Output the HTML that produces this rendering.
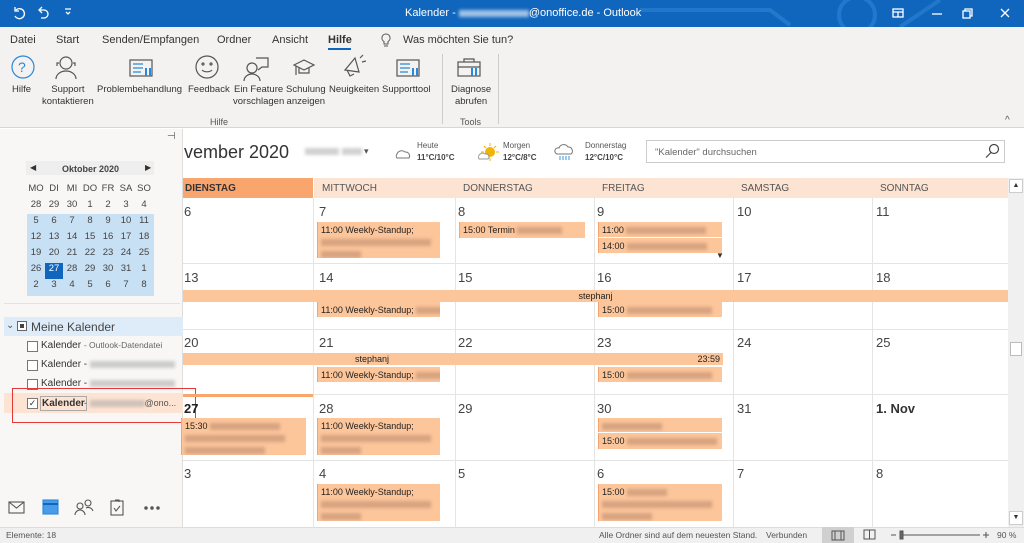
<!DOCTYPE html>
<html><head><meta charset="utf-8"><style>
*{margin:0;padding:0;box-sizing:border-box}
body{width:1024px;height:543px;overflow:hidden;font-family:"Liberation Sans",sans-serif;background:#fff;position:relative;color:#333}
.a{position:absolute}
.t{font-size:11px;white-space:nowrap}
.blur{display:inline-block;height:7px;background:#a0705a;opacity:.4;filter:blur(1.5px);vertical-align:middle}
.gb{background:#999;opacity:.45}
.ev{position:absolute;background:#fcc59a;border-left:3px solid #fff;box-shadow:inset 1px 0 0 #f6a36e;font-size:9px;color:#222;padding:2px 4px;line-height:12px;overflow:hidden;white-space:nowrap}
.day{position:absolute;font-size:13px;color:#444}
.vl{position:absolute;width:1px;background:#e4e4e4}
.hl{position:absolute;height:1px;background:#e4e4e4}
.hd{position:absolute;top:178px;height:20px;background:#fde3d2;font-size:10px;color:#555;padding:5px 0 0 8px}
.rb{position:absolute;top:55px;text-align:center;font-size:9.5px;color:#333;line-height:12px}
.mc td{width:18px;height:16px;text-align:center;font-size:9.5px;color:#444}
</style></head><body>
<!-- title bar -->
<div class="a" style="left:0;top:0;width:1024px;height:27px;background:#1066bd"></div>
<svg class="a" style="left:0;top:0" width="1024" height="27"><g stroke="#2a80d0" fill="none" stroke-width="4" opacity=".7"><circle cx="857" cy="15" r="18"/><path d="M640 10 H770 L790 25 M900 27 L940 0"/></g>
<g stroke="#fff" fill="none" stroke-width="1.3"><path d="M16 10a5 5 0 1 1 -1 6M15 7v4h4"/><path d="M42 7l-3 3 3 3M39 10h5a4 4 0 0 1 0 8h-3"/><path d="M66 12l2 2 2-2M65 9h6"/><rect x="893" y="9" width="10" height="8"/><path d="M893 12h10M898 12v5"/><path d="M932 14h10"/><rect x="963" y="11" width="7" height="7"/><path d="M965 11v-2h7v7h-2"/><path d="M1001 9l8 8M1009 9l-8 8"/></g></svg>
<div class="a t" style="left:405px;top:7px;color:#fff;font-size:11px">Kalender - <span class="blur" style="width:70px;background:#fff;opacity:.6"></span>@onoffice.de - Outlook</div>
<!-- ribbon -->
<div class="a" style="left:0;top:27px;width:1024px;height:101px;background:#f3f2f1;border-bottom:1px solid #d6d6d6"></div>
<div class="a t" style="top:34px;left:10px;font-size:11px;color:#333">Datei</div>
<div class="a t" style="top:34px;left:56px;font-size:11px">Start</div>
<div class="a t" style="top:34px;left:102px;font-size:11px">Senden/Empfangen</div>
<div class="a t" style="top:34px;left:217px;font-size:11px">Ordner</div>
<div class="a t" style="top:34px;left:272px;font-size:11px">Ansicht</div>
<div class="a t" style="top:34px;left:328px;font-size:11px;font-weight:bold">Hilfe</div>
<div class="a" style="top:48px;left:328px;width:23px;height:2px;background:#1066bd"></div>
<svg class="a" style="left:380px;top:32px" width="12" height="16"><path d="M6 2a4 4 0 0 0-2 7.5V12h4V9.5A4 4 0 0 0 6 2zM4 14h4" fill="none" stroke="#555"/></svg>
<div class="a t" style="top:34px;left:403px;font-size:11px">Was möchten Sie tun?</div>
<svg class="a" style="left:0;top:52px" width="520" height="32" fill="none" stroke="#555" stroke-width="1.2">
<circle cx="23" cy="15" r="11" stroke="#2b88d8"/><text x="18" y="20" font-size="14" fill="#2b88d8" stroke="none" font-family="Liberation Sans">?</text>
<circle cx="66" cy="11" r="6"/><path d="M56 27a10 8 0 0 1 20 0M59 11h-2v3M73 11h2v3"/>
<rect x="130" y="8" width="22" height="16"/><path d="M133 12h10M133 16h10M133 20h8" stroke="#2b88d8"/><path d="M146 16v8M150 16v8" stroke="#2b88d8" stroke-width="2"/>
<circle cx="207" cy="15" r="11"/><circle cx="203" cy="12" r="1"/><circle cx="211" cy="12" r="1"/><path d="M202 18a6 4 0 0 0 10 0"/>
<circle cx="252" cy="16" r="5"/><path d="M244 29a8 7 0 0 1 16 0M256 6h12v9h-6l-4 3"/>
<path d="M294 13l10-5 10 5-10 5zM299 15v6h10v-6M296 14v9"/>
<path d="M345 18l10-12 4 14zM347 18l3 6 4-2M360 6l3-3M362 10l4-1"/>
<rect x="397" y="8" width="22" height="16"/><path d="M400 12h10M400 16h10M400 20h8" stroke="#2b88d8"/><path d="M413 16v8M417 16v8" stroke="#2b88d8" stroke-width="2"/>
<rect x="458" y="10" width="22" height="14"/><path d="M464 10v-3h10v3M458 15h22"/><path d="M472 16v8M476 16v8" stroke="#2b88d8" stroke-width="2"/>
</svg>
<div class="rb" style="left:12px;top:84px">Hilfe</div>
<div class="rb" style="left:42px;top:84px">Support<br>kontaktieren</div>
<div class="rb" style="left:97px;top:84px">Problembehandlung</div>
<div class="rb" style="left:188px;top:84px">Feedback</div>
<div class="rb" style="left:233px;top:84px">Ein Feature<br>vorschlagen</div>
<div class="rb" style="left:286px;top:84px">Schulung<br>anzeigen</div>
<div class="rb" style="left:329px;top:84px">Neuigkeiten</div>
<div class="rb" style="left:382px;top:84px">Supporttool</div>
<div class="rb" style="left:451px;top:84px">Diagnose<br>abrufen</div>
<div class="rb" style="left:210px;top:116px;font-size:9px;color:#555">Hilfe</div>
<div class="rb" style="left:460px;top:116px;font-size:9px;color:#555">Tools</div>
<div class="a" style="left:442px;top:54px;width:1px;height:70px;background:#ccc"></div>
<div class="a" style="left:498px;top:54px;width:1px;height:70px;background:#ccc"></div>
<div class="a t" style="left:1005px;top:115px;font-size:10px;color:#555">^</div>
<!-- left pane -->
<div class="a" style="left:0;top:129px;width:183px;height:398px;background:#f8f7f6;border-right:1px solid #ddd"></div>
<div class="a t" style="left:167px;top:131px;font-size:10px;color:#555">⊣</div>
<div class="a" style="left:26px;top:161px;width:128px;height:14px;background:#eeeeee"></div>
<div class="a t" style="left:30px;top:163px;font-size:8px;color:#333">◀</div>
<div class="a t" style="left:145px;top:163px;font-size:8px;color:#333">▶</div>
<div class="a t" style="left:62px;top:164px;font-size:9px;font-weight:bold;color:#444">Oktober 2020</div>
<div class="a" style="left:27px;top:214px;width:127px;height:82px;background:#c7e0f4"></div>
<div class="a" style="left:45px;top:263px;width:18px;height:16px;background:#1066bd"></div>
<table class="a mc" style="left:27px;top:180px;border-collapse:collapse">
<tr><td>MO</td><td>DI</td><td>MI</td><td>DO</td><td>FR</td><td>SA</td><td>SO</td></tr>
<tr><td>28</td><td>29</td><td>30</td><td>1</td><td>2</td><td>3</td><td>4</td></tr>
<tr><td>5</td><td>6</td><td>7</td><td>8</td><td>9</td><td>10</td><td>11</td></tr>
<tr><td>12</td><td>13</td><td>14</td><td>15</td><td>16</td><td>17</td><td>18</td></tr>
<tr><td>19</td><td>20</td><td>21</td><td>22</td><td>23</td><td>24</td><td>25</td></tr>
<tr><td>26</td><td style="color:#fff">27</td><td>28</td><td>29</td><td>30</td><td>31</td><td>1</td></tr>
<tr><td>2</td><td>3</td><td>4</td><td>5</td><td>6</td><td>7</td><td>8</td></tr>
</table>
<div class="a" style="left:4px;top:303px;width:176px;height:1px;background:#e2e2e2"></div>
<div class="a" style="left:4px;top:317px;width:179px;height:19px;background:#deecf9"></div>
<div class="a t" style="left:6px;top:320px;font-size:10px;color:#555">⌄</div>
<div class="a" style="left:17px;top:321px;width:10px;height:10px;border:1px solid #666;background:#fff"><div style="margin:2px;width:4px;height:4px;background:#444"></div></div>
<div class="a t" style="left:31px;top:320px;font-size:12px;color:#444">Meine Kalender</div>
<div class="a" style="left:27px;top:341px;width:11px;height:11px;border:1px solid #777;background:#fff"></div>
<div class="a t" style="left:41px;top:340px;font-size:10px">Kalender <span style="font-size:8.5px;color:#666">- Outlook-Datendatei</span></div>
<div class="a" style="left:27px;top:360px;width:11px;height:11px;border:1px solid #777;background:#fff"></div>
<div class="a t" style="left:41px;top:359px;font-size:10px">Kalender - <span class="blur gb" style="width:85px"></span></div>
<div class="a" style="left:27px;top:379px;width:11px;height:11px;border:1px solid #777;background:#fff"></div>
<div class="a t" style="left:41px;top:378px;font-size:10px">Kalender - <span class="blur gb" style="width:85px"></span></div>
<div class="a" style="left:4px;top:393px;width:179px;height:20px;background:#fde3d2"></div>
<div class="a" style="left:27px;top:398px;width:11px;height:11px;border:1px solid #777;background:#fff;font-size:9px;line-height:9px;text-align:center">✓</div>
<div class="a t" style="left:40px;top:396px;font-size:10px;font-weight:bold;border:1px solid #aaa;padding:1px 1px;line-height:11px">Kalender</div>
<div class="a t" style="left:84px;top:398px;font-size:9px;color:#555">- <span class="blur gb" style="width:55px"></span>@ono...</div>
<div class="a" style="left:12px;top:388px;width:184px;height:35px;border:1.5px solid #e53935"></div>
<svg class="a" style="left:0;top:495px" width="183" height="25" fill="none" stroke="#555" stroke-width="1.1">
<rect x="9" y="7" width="15" height="11"/><path d="M9 7l7.5 6 7.5-6"/>
<rect x="43" y="5" width="15" height="14" fill="#4a9ce8" stroke="#2b88d8"/><path d="M43 9h15" stroke="#1066bd" stroke-width="2"/>
<circle cx="80" cy="11" r="3"/><path d="M75 20a5 5 0 0 1 10 0"/><circle cx="88" cy="8" r="3"/><path d="M86 13a5 5 0 0 1 7 3"/>
<rect x="111" y="6" width="12" height="14"/><path d="M114 13l2 3 4-5M115 5h4v2"/>
<circle cx="146" cy="13" r="1.2" fill="#555"/><circle cx="152" cy="13" r="1.2" fill="#555"/><circle cx="158" cy="13" r="1.2" fill="#555"/>
</svg>
<!-- calendar header -->
<div class="a t" style="left:184px;top:142px;font-size:18px;color:#333">vember 2020</div>
<div class="a t" style="left:305px;top:146px;font-size:9px;color:#555"><span class="blur gb" style="width:34px"></span> <span class="blur gb" style="width:20px"></span> ▾</div>
<svg class="a" style="left:385px;top:140px" width="260" height="24"><path d="M8 6a7 7 0 0 0 4 13 7 7 0 0 1-4-13z" fill="#f2b400"/><path d="M12 18h12a4 4 0 0 0-4-6 5 5 0 0 0-8 2 3 3 0 0 0 0 4z" fill="#fff" stroke="#777"/>
<circle cx="105" cy="12" r="5" fill="#f2b400"/><path d="M105 3v3M105 18v3M96 12h3M111 12h3M99 6l2 2M111 6l-2 2" stroke="#f2b400"/><path d="M94 19h9a3 3 0 0 0-3-5 4 4 0 0 0-6 5z" fill="#fff" stroke="#999"/>
<path d="M172 14h14a4 4 0 0 0-3-7 5 5 0 0 0-9 1 3 3 0 0 0-2 6z" fill="#fff" stroke="#777"/><path d="M175 16v4M178 16v4M181 16v4M184 16v4" stroke="#3a96dd"/></svg>
<div class="a t" style="left:417px;top:141px;font-size:8px;color:#555">Heute</div>
<div class="a t" style="left:417px;top:153px;font-size:8px;font-weight:bold;color:#444">11°C/10°C</div>
<div class="a t" style="left:503px;top:141px;font-size:8px;color:#555">Morgen</div>
<div class="a t" style="left:503px;top:153px;font-size:8px;font-weight:bold;color:#444">12°C/8°C</div>
<div class="a t" style="left:585px;top:141px;font-size:8px;color:#555">Donnerstag</div>
<div class="a t" style="left:585px;top:153px;font-size:8px;font-weight:bold;color:#444">12°C/10°C</div>
<div class="a" style="left:646px;top:140px;width:359px;height:23px;border:1px solid #ccc;background:#fff"></div>
<div class="a t" style="left:655px;top:147px;font-size:9.5px;color:#666">"Kalender" durchsuchen</div>
<svg class="a" style="left:985px;top:143px" width="16" height="16" fill="none" stroke="#444" stroke-width="1.2"><circle cx="9" cy="6" r="4.5"/><path d="M6 9.5L1 14.5"/></svg>
<!-- day headers -->
<div class="hd" style="left:183px;width:130px;background:#f8a66e;color:#333;font-weight:bold;padding-left:2px">DIENSTAG</div>
<div class="hd" style="left:314px;width:141px">MITTWOCH</div>
<div class="hd" style="left:455px;width:139px">DONNERSTAG</div>
<div class="hd" style="left:594px;width:139px">FREITAG</div>
<div class="hd" style="left:733px;width:139px">SAMSTAG</div>
<div class="hd" style="left:872px;width:136px">SONNTAG</div>
<!-- scrollbar -->
<div class="a" style="left:1008px;top:178px;width:16px;height:349px;background:#f0f0f0"></div>
<div class="a" style="left:1009px;top:179px;width:14px;height:14px;background:#fff;border:1px solid #ccc;font-size:7px;text-align:center;line-height:12px">▲</div>
<div class="a" style="left:1010px;top:342px;width:12px;height:14px;background:#fff;border:1px solid #bbb"></div>
<div class="a" style="left:1009px;top:511px;width:14px;height:14px;background:#fff;border:1px solid #ccc;font-size:7px;text-align:center;line-height:12px">▼</div>
<!-- grid lines -->
<div class="vl" style="left:313px;top:198px;height:329px"></div>
<div class="vl" style="left:455px;top:198px;height:329px"></div>
<div class="vl" style="left:594px;top:198px;height:329px"></div>
<div class="vl" style="left:733px;top:198px;height:329px"></div>
<div class="vl" style="left:872px;top:198px;height:329px"></div>
<div class="hl" style="left:183px;top:263px;width:825px"></div>
<div class="hl" style="left:183px;top:329px;width:825px"></div>
<div class="hl" style="left:183px;top:394px;width:825px"></div>
<div class="hl" style="left:183px;top:460px;width:825px"></div>
<div class="a" style="left:183px;top:394px;width:130px;height:3px;background:#f8a66e"></div>
<!-- day numbers -->
<div class="day" style="left:184px;top:204px">6</div><div class="day" style="left:319px;top:204px">7</div><div class="day" style="left:458px;top:204px">8</div><div class="day" style="left:597px;top:204px">9</div><div class="day" style="left:737px;top:204px">10</div><div class="day" style="left:876px;top:204px">11</div>
<div class="day" style="left:184px;top:270px">13</div><div class="day" style="left:319px;top:270px">14</div><div class="day" style="left:458px;top:270px">15</div><div class="day" style="left:597px;top:270px">16</div><div class="day" style="left:737px;top:270px">17</div><div class="day" style="left:876px;top:270px">18</div>
<div class="day" style="left:184px;top:335px">20</div><div class="day" style="left:319px;top:335px">21</div><div class="day" style="left:458px;top:335px">22</div><div class="day" style="left:597px;top:335px">23</div><div class="day" style="left:737px;top:335px">24</div><div class="day" style="left:876px;top:335px">25</div>
<div class="day" style="left:184px;top:401px;font-weight:bold;color:#222">27</div><div class="day" style="left:319px;top:401px">28</div><div class="day" style="left:458px;top:401px">29</div><div class="day" style="left:597px;top:401px">30</div><div class="day" style="left:737px;top:401px">31</div><div class="day" style="left:876px;top:401px;font-weight:bold;color:#333">1. Nov</div>
<div class="day" style="left:184px;top:466px">3</div><div class="day" style="left:319px;top:466px">4</div><div class="day" style="left:458px;top:466px">5</div><div class="day" style="left:597px;top:466px">6</div><div class="day" style="left:737px;top:466px">7</div><div class="day" style="left:876px;top:466px">8</div>
<!-- events -->
<div class="ev" style="left:314px;top:222px;width:126px;height:36px">11:00 Weekly-Standup;<br><span class="blur" style="width:110px"></span><br><span class="blur" style="width:40px"></span></div>
<div class="ev" style="left:456px;top:222px;width:129px;height:16px">15:00 Termin <span class="blur" style="width:45px"></span></div>
<div class="ev" style="left:595px;top:222px;width:127px;height:15px">11:00 <span class="blur" style="width:80px"></span></div>
<div class="ev" style="left:595px;top:238px;width:127px;height:15px">14:00 <span class="blur" style="width:80px"></span></div>
<div class="a t" style="left:716px;top:251px;font-size:8px;color:#333">▼</div>
<div class="a" style="left:183px;top:290px;width:825px;height:12px;background:#fcc59a;font-size:9px;text-align:center;line-height:12px;color:#222">stephanj</div>
<div class="ev" style="left:314px;top:302px;width:126px;height:15px">11:00 Weekly-Standup; <span class="blur" style="width:30px"></span></div>
<div class="ev" style="left:595px;top:302px;width:127px;height:15px">15:00 <span class="blur" style="width:85px"></span></div>
<div class="a" style="left:183px;top:353px;width:540px;height:12px;background:#fcc59a;font-size:9px;line-height:12px;color:#222"><span style="position:absolute;left:172px">stephanj</span><span style="position:absolute;right:3px">23:59</span></div>
<div class="ev" style="left:314px;top:367px;width:126px;height:15px">11:00 Weekly-Standup; <span class="blur" style="width:30px"></span></div>
<div class="ev" style="left:595px;top:367px;width:127px;height:15px">15:00 <span class="blur" style="width:85px"></span></div>
<div class="ev" style="left:181px;top:418px;width:125px;height:37px;border-left:0">15:30 <span class="blur" style="width:70px"></span><br><span class="blur" style="width:100px"></span><br><span class="blur" style="width:80px"></span></div>
<div class="ev" style="left:314px;top:418px;width:126px;height:37px">11:00 Weekly-Standup;<br><span class="blur" style="width:110px"></span><br><span class="blur" style="width:40px"></span></div>
<div class="ev" style="left:595px;top:418px;width:127px;height:14px"><span class="blur" style="width:60px"></span></div>
<div class="ev" style="left:595px;top:433px;width:127px;height:16px">15:00 <span class="blur" style="width:90px"></span></div>
<div class="ev" style="left:314px;top:484px;width:126px;height:37px">11:00 Weekly-Standup;<br><span class="blur" style="width:110px"></span><br><span class="blur" style="width:40px"></span></div>
<div class="ev" style="left:595px;top:484px;width:127px;height:37px">15:00 <span class="blur" style="width:40px"></span><br><span class="blur" style="width:110px"></span><br><span class="blur" style="width:50px"></span></div>
<!-- status bar -->
<div class="a" style="left:0;top:527px;width:1024px;height:16px;background:#f0f0f0;border-top:1px solid #ddd"></div>
<div class="a t" style="left:6px;top:530px;font-size:8.5px;color:#555">Elemente: 18</div>
<div class="a t" style="left:599px;top:530px;font-size:8.5px;color:#555">Alle Ordner sind auf dem neuesten Stand.</div>
<div class="a t" style="left:766px;top:530px;font-size:8.5px;color:#555">Verbunden</div>
<div class="a" style="left:822px;top:527px;width:32px;height:16px;background:#d0d0d0"></div>
<svg class="a" style="left:822px;top:527px" width="180" height="16" fill="none" stroke="#555"><rect x="10" y="4" width="12" height="9"/><path d="M13 4v9M19 4v9"/><rect x="42" y="3" width="11" height="9"/><path d="M47.5 3v9"/><path d="M69 8h5M80 8h78M161 8h6M164 5v6"/><rect x="78" y="4" width="3" height="8" fill="#666"/></svg>
<div class="a t" style="left:997px;top:530px;font-size:8.5px;color:#555">90 %</div>
</body></html>
